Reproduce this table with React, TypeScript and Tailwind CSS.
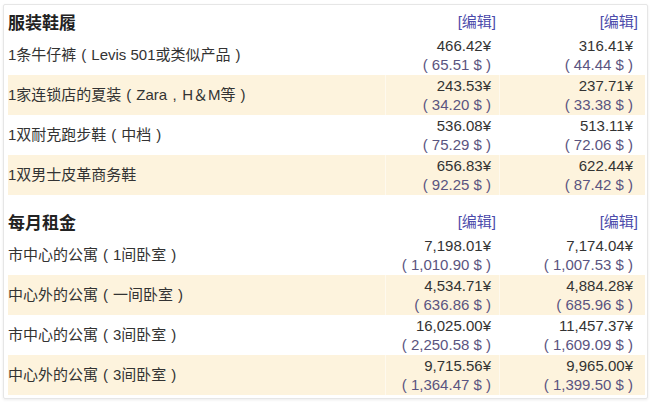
import React from "react";

type Row = { label: string; a: [string, string]; b: [string, string] };

const sections: { title: string; rows: Row[] }[] = [
  {
    title: "服装鞋履",
    rows: [
      { label: "1条牛仔裤（Levis 501或类似产品）", a: ["466.42¥", "( 65.51 $ )"], b: ["316.41¥", "( 44.44 $ )"] },
      { label: "1家连锁店的夏装（Zara，H＆M等）", a: ["243.53¥", "( 34.20 $ )"], b: ["237.71¥", "( 33.38 $ )"] },
      { label: "1双耐克跑步鞋（中档）", a: ["536.08¥", "( 75.29 $ )"], b: ["513.11¥", "( 72.06 $ )"] },
      { label: "1双男士皮革商务鞋", a: ["656.83¥", "( 92.25 $ )"], b: ["622.44¥", "( 87.42 $ )"] },
    ],
  },
  {
    title: "每月租金",
    rows: [
      { label: "市中心的公寓（1间卧室）", a: ["7,198.01¥", "( 1,010.90 $ )"], b: ["7,174.04¥", "( 1,007.53 $ )"] },
      { label: "中心外的公寓（一间卧室）", a: ["4,534.71¥", "( 636.86 $ )"], b: ["4,884.28¥", "( 685.96 $ )"] },
      { label: "市中心的公寓（3间卧室）", a: ["16,025.00¥", "( 2,250.58 $ )"], b: ["11,457.37¥", "( 1,609.09 $ )"] },
      { label: "中心外的公寓（3间卧室）", a: ["9,715.56¥", "( 1,364.47 $ )"], b: ["9,965.00¥", "( 1,399.50 $ )"] },
    ],
  },
];

// full-width punctuation drawn centred in its em box, as on the original site
const punct: Record<string, string> = { "（": "(", "）": ")", "，": "," };

function Label({ text }: { text: string }) {
  const parts = text.split(/([（），])/).filter(Boolean);
  return (
    <>
      {parts.map((p, i) =>
        punct[p] ? (
          <span key={i} className="inline-block w-[15px] text-center">
            {punct[p]}
          </span>
        ) : (
          <span key={i}>{p}</span>
        )
      )}
    </>
  );
}

function Price({ v, pr }: { v: [string, string]; pr: string }) {
  return (
    <div className={`flex flex-col items-end justify-center leading-[19px] ${pr}`}>
      <span className="text-[#333]">{v[0]}</span>
      <span className="text-[#5a5480]">{v[1]}</span>
    </div>
  );
}

export default function App() {
  return (
    <div
      className="min-h-screen bg-white pt-[4px] pl-[3px] pr-[4px] text-[15px]"
      style={{ fontFamily: '"Liberation Sans", "Noto Sans CJK SC", sans-serif' }}
    >
      <div className="border border-[#e6e6e6] rounded-[2px] shadow-[0_1px_3px_rgba(0,0,0,0.08)] pl-[4px] pr-[2px] pb-[3px]">
        {sections.map((s, si) => (
          <div key={s.title}>
            <div
              className={`grid grid-cols-[1fr_114px_145px] items-end ${si === 0 ? "h-[30px]" : "h-[40px]"}`}
            >
              <div className="font-bold text-[17px] leading-[20px] text-[#222] pb-[1px]">{s.title}</div>
              <div className="text-right pr-[4px] pb-[3px] leading-[20px]">
                <a className="text-[#4b4bab]">[编辑]</a>
              </div>
              <div className="text-right pr-[7px] pb-[3px] leading-[20px]">
                <a className="text-[#4b4bab]">[编辑]</a>
              </div>
            </div>
            {s.rows.map((r, i) => (
              <div
                key={r.label}
                className={`grid grid-cols-[1fr_114px_145px] h-[40px] ${i % 2 === 1 ? "bg-[#fdf3dd]" : "bg-white"}`}
              >
                <div className="flex items-center text-[#333] border-r border-white/50">
                  <span>
                    <Label text={r.label} />
                  </span>
                </div>
                <div className="border-r border-white/50">
                  <Price v={r.a} pr="pr-[8px] h-full" />
                </div>
                <Price v={r.b} pr="pr-[12px] h-full" />
              </div>
            ))}
          </div>
        ))}
      </div>
    </div>
  );
}
